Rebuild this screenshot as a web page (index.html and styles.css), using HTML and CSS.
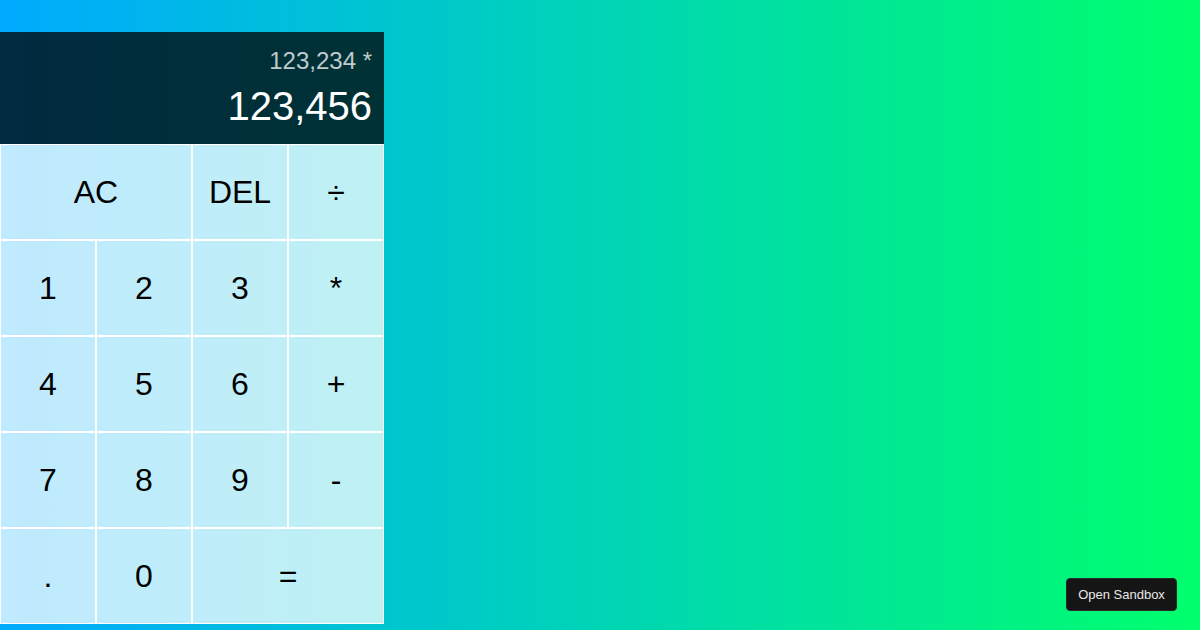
FILE: index.html
```html
<!DOCTYPE html>
<html lang="en">
<head>
<meta charset="utf-8">
<title>Calculator</title>
<link rel="stylesheet" href="styles.css">
</head>
<body>
<div class="calculator-grid">
  <div class="output">
    <div class="previous-operand">123,234 *</div>
    <div class="current-operand">123,456</div>
  </div>
  <button class="span-two">AC</button>
  <button>DEL</button>
  <button>÷</button>
  <button>1</button>
  <button>2</button>
  <button>3</button>
  <button>*</button>
  <button>4</button>
  <button>5</button>
  <button>6</button>
  <button>+</button>
  <button>7</button>
  <button>8</button>
  <button>9</button>
  <button>-</button>
  <button>.</button>
  <button>0</button>
  <button class="span-two">=</button>
</div>
<button class="sandbox-btn">Open Sandbox</button>
</body>
</html>
```
FILE: styles.css
```css
*, *::before, *::after {
  box-sizing: border-box;
}

html, body {
  margin: 0;
  padding: 0;
}

body {
  min-height: 100vh;
  background: linear-gradient(to right, #00aaff, #00ff6c);
  font-family: "Liberation Sans", Arial, sans-serif;
}

.calculator-grid {
  display: grid;
  padding-top: 32px;
  grid-template-columns: repeat(4, 96px);
  grid-template-rows: 112px repeat(5, 96px);
}

.calculator-grid > button {
  cursor: pointer;
  font-family: "Liberation Sans", Arial, sans-serif;
  font-size: 32px;
  color: #000;
  border: 1px solid #fff;
  outline: none;
  margin: 0;
  padding: 0;
  background-color: rgba(255, 255, 255, 0.75);
}

.span-two {
  grid-column: span 2;
}

.output {
  grid-column: 1 / -1;
  background-color: rgba(0, 0, 0, 0.75);
  display: flex;
  flex-direction: column;
  align-items: flex-end;
  justify-content: space-around;
  padding: 10px 12px 10px 10px;
  word-wrap: break-word;
  word-break: break-all;
}

.previous-operand {
  color: rgba(255, 255, 255, 0.75);
  font-size: 24px;
}

.current-operand {
  color: #fff;
  font-size: 40px;
}

.sandbox-btn {
  position: fixed;
  right: 23px;
  bottom: 19px;
  width: 111px;
  height: 33px;
  padding: 0;
  background: #151515;
  color: #e8e8e8;
  border: 1px solid #2a2a2a;
  border-radius: 4px;
  font-family: "Liberation Sans", Arial, sans-serif;
  font-size: 13px;
  cursor: pointer;
}
```
